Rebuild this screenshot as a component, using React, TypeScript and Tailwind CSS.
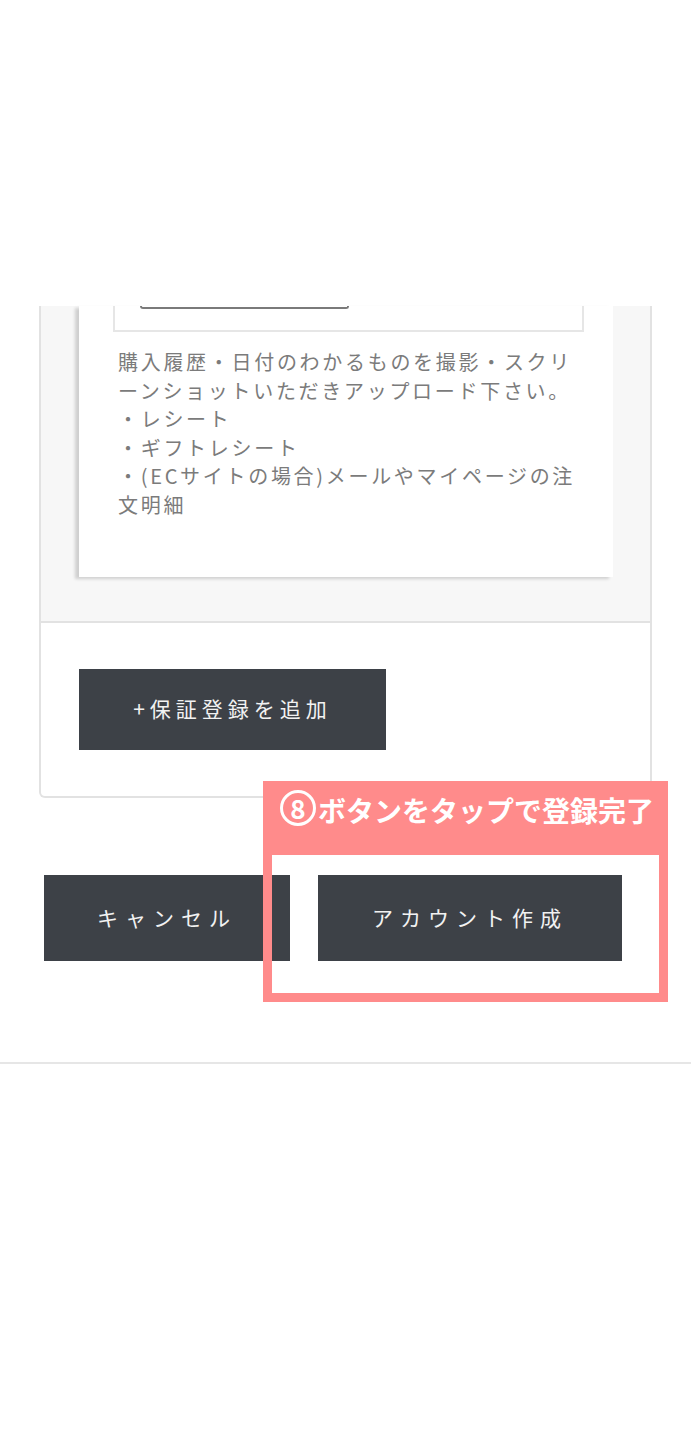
const jp = "font-['Noto_Sans_CJK_JP',_'Noto_Sans',_sans-serif]";

export default function App() {
  return (
    <div className={`min-h-[1430px] w-[691px] bg-white ${jp}`}>
      {/* scrolled-off area above */}
      <div className="h-[306px]" />

      {/* warranty card (top cut off) */}
      <div className="mx-[39px] rounded-b-[6px] border-x-2 border-b-2 border-[#e2e2e2]">
        <div className="border-b-2 border-[#e2e2e2] bg-[#f7f7f7] pb-[44px] pl-[38px] pr-[37px]">
          <div className="bg-white pb-[57px] pl-[34px] pr-[29px] shadow-[-4px_2px_3px_rgba(0,0,0,0.16)]">
            {/* upload box */}
            <div className="h-[26px] border-x-2 border-b-2 border-[#e6e6e6] bg-white pl-[25px]">
              <div className="h-[3px] w-[209px] rounded-b-[6px] border-x-2 border-b-2 border-[#7a7a7a]" />
            </div>
            <p className="mt-[16px] pl-[5px] text-[20px] leading-[28.6px] tracking-[2.7px] text-[#7b7b7b]">
              購入履歴・日付のわかるものを撮影・スクリーンショットいただきアップロード下さい。
              <br />・レシート
              <br />・ギフトレシート
              <br />・(ECサイトの場合)メールやマイページの注文明細
            </p>
          </div>
        </div>
        <div className="px-[38px] py-[46px]">
          <button className="flex h-[81px] w-[307px] items-center justify-center bg-[#3d4147] text-[21px] tracking-[5px] text-[#f2f2f2]">
            +保証登録を追加
          </button>
        </div>
      </div>

      {/* actions */}
      <div className="relative">
        <div className="flex gap-[28px] pl-[44px] pt-[77px]">
          <button className="flex h-[86px] w-[246px] items-center justify-center bg-[#3d4147] text-[21px] tracking-[7px] text-[#f2f2f2]">
            キャンセル
          </button>
          <button className="flex h-[86px] w-[304px] items-center justify-center bg-[#3d4147] text-[21px] tracking-[7px] text-[#f2f2f2]">
            アカウント作成
          </button>
        </div>

        {/* annotation overlay */}
        <div className="absolute left-[263px] top-[-17px] flex h-[221px] w-[405px] flex-col border-x-[9px] border-b-[9px] border-[#ff8b8b]">
          <div className="flex h-[74px] items-start bg-[#ff8b8b] pl-[8px] pt-[9px] text-[28px] font-bold leading-[40px] text-white">
            <span className="mr-[2px] flex h-[36px] w-[36px] items-center justify-center rounded-full border-[3px] border-white text-[26px] leading-none">
              8
            </span>
            ボタンをタップで登録完了
          </div>
        </div>

        <div className="mt-[101px] h-[2px] bg-[#e6e6e6]" />
      </div>
    </div>
  );
}
